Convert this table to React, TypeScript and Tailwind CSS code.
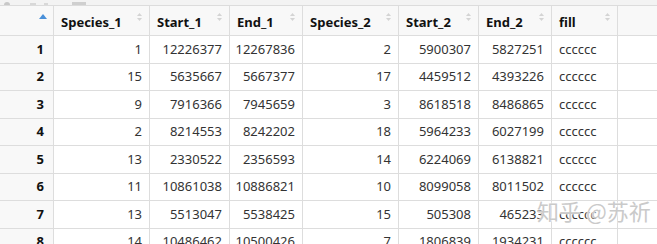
import React from "react";

const widths = ["w-[54px]", "w-[96px]", "w-[80px]", "w-[73px]", "w-[96px]", "w-[80px]", "w-[73px]", "w-[66px]"];
const headers = ["Species_1", "Start_1", "End_1", "Species_2", "Start_2", "End_2", "fill"];
const rows: (string | number)[][] = [
  [1, 12226377, 12267836, 2, 5900307, 5827251, "cccccc"],
  [15, 5635667, 5667377, 17, 4459512, 4393226, "cccccc"],
  [9, 7916366, 7945659, 3, 8618518, 8486865, "cccccc"],
  [2, 8214553, 8242202, 18, 5964233, 6027199, "cccccc"],
  [13, 2330522, 2356593, 14, 6224069, 6138821, "cccccc"],
  [11, 10861038, 10886821, 10, 8099058, 8011502, "cccccc"],
  [13, 5513047, 5538425, 15, 505308, 465233, "cccccc"],
  [14, 10486462, 10500426, 7, 1806839, 1934231, "cccccc"],
];

function SortIcon() {
  return (
    <svg width="7" height="10" viewBox="0 0 7 10" className="shrink-0">
      <path d="M3.5 1 L6 4 L1 4 Z" fill="#d4d4d4" />
      <path d="M3.5 9 L6 6 L1 6 Z" fill="#d4d4d4" />
    </svg>
  );
}

export default function App() {
  return (
    <div
      className="relative w-[657px] h-[244px] overflow-hidden bg-white text-[#333]"
      style={{ fontFamily: '"Noto Sans", "Open Sans", sans-serif' }}
    >
      <div className="h-[6px] bg-[#f3f3f3] border-b border-[#dcdcdc] flex items-end gap-2 pl-1">
        <div className="w-[6px] h-[3px] rounded-t bg-[#c8c8c8]" />
        <div className="w-[6px] h-[2px] bg-[#d8d8d8] ml-3" />
        <div className="w-[4px] h-[2px] bg-[#d8d8d8]" />
        <div className="w-[14px] h-[3px] bg-[#cfcfcf] ml-4" />
      </div>
      <div className="flex h-[30px] bg-[#f8f8f8] border-b border-[#dddddd]">
        <div className={`${widths[0]} shrink-0 border-r border-[#dddddd] flex items-start justify-end pr-[6px] pt-[8px]`}>
          <svg width="8" height="5" viewBox="0 0 8 5">
            <path d="M4 0 L8 5 L0 5 Z" fill="#4a90d9" />
          </svg>
        </div>
        {headers.map((h, i) => (
          <div
            key={h}
            className={`${widths[i + 1]} shrink-0 border-r border-[#dddddd] flex items-start justify-between pl-[7px] pr-[6px]`}
          >
            <span className="text-[13px] font-bold text-[#111] leading-none pt-[10px]">{h}</span>
            <span className="pt-[6px]">
              <SortIcon />
            </span>
          </div>
        ))}
      </div>
      {rows.map((r, ri) => (
        <div key={ri} className="flex h-[27.5px] border-b border-[#dddddd]">
          <div className={`${widths[0]} shrink-0 bg-[#f8f8f8] border-r border-[#dddddd] flex items-center justify-end pr-[9px] text-[13px] font-bold text-[#111]`}>
            {ri + 1}
          </div>
          {r.map((v, ci) => (
            <div
              key={ci}
              className={`${widths[ci + 1]} shrink-0 border-r border-[#dddddd] flex items-center text-[13px] ${
                ci === 6 ? "justify-start pl-[7px]" : "justify-end pr-[7px]"
              }`}
            >
              {v}
            </div>
          ))}
        </div>
      ))}
      <div
        className="absolute left-[537px] top-[199px] whitespace-nowrap text-[22px] text-[#cacaca] leading-none"
        style={{
          fontFamily: '"Noto Sans CJK SC", sans-serif',
          textShadow: "0 0 2px #fff, 0 0 2px #fff",
        }}
      >
        知乎 @苏祈
      </div>
    </div>
  );
}
